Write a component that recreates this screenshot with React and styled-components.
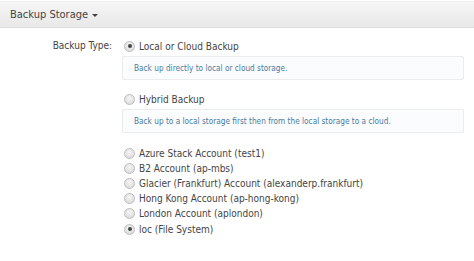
import React from "react";
import styled, { createGlobalStyle } from "styled-components";

const Global = createGlobalStyle`
  html, body { margin: 0; padding: 0; background: #fff; }
  body { font-family: "DejaVu Sans Condensed", "DejaVu Sans", Verdana, sans-serif; color: #444; }
`;

const Page = styled.div`
  width: 474px;
  height: 261px;
  overflow: hidden;
  padding-top: 1px;
  box-sizing: border-box;
`;

const Header = styled.div`
  height: 25px;
  display: flex;
  align-items: center;
  padding-left: 10px;
  background: linear-gradient(#f6f6f6, #e8e8e8);
  border-top: 1px solid #f0f0f0;
  border-bottom: 1px solid #dcdcdc;
  font-size: 11px;
  color: #444;
`;

const Caret = styled.span`
  display: inline-block;
  margin-left: 4px;
  width: 0;
  height: 0;
  border-left: 3px solid transparent;
  border-right: 3px solid transparent;
  border-top: 3px solid #444;
  transform: translateY(1px);
`;

const Body = styled.div`
  display: grid;
  grid-template-columns: 112px 1fr;
  column-gap: 10px;
  padding-top: 10px;
  padding-right: 10px;
`;

const Label = styled.div`
  text-align: right;
  font-size: 10px;
  line-height: 16px;
  color: #444;
`;

const Options = styled.div`
  display: flex;
  flex-direction: column;
`;

const Radio = styled.label`
  display: flex;
  align-items: center;
  gap: 4px;
  height: ${(p) => p.$h || 15.2}px;
  font-size: 10px;
  color: #444;
  white-space: nowrap;
  padding-left: 2px;
`;

const Dot = styled.span`
  width: 11px;
  height: 11px;
  border-radius: 50%;
  box-sizing: border-box;
  border: 1px solid #bdbdbd;
  background: radial-gradient(circle at 50% 35%, #f5f5f5, #d6d6d6);
  display: flex;
  align-items: center;
  justify-content: center;
  flex: none;
  &::after {
    content: "";
    width: 4px;
    height: 4px;
    border-radius: 50%;
    background: ${(p) => (p.$on ? "#444" : "transparent")};
  }
`;

const Desc = styled.div`
  margin-top: 2px;
  height: 24px;
  box-sizing: border-box;
  border: 1px solid #ececec;
  background: #fbfcfd;
  border-radius: 2px;
  padding-left: 11px;
  display: flex;
  align-items: center;
  font-size: 8.2px;
  color: #4a7ba0;
`;

const Gap = styled.div`
  height: ${(p) => p.$h}px;
`;

const accounts = [
  ["Azure Stack Account (test1)", false],
  ["B2 Account (ap-mbs)", false],
  ["Glacier (Frankfurt) Account (alexanderp.frankfurt)", false],
  ["Hong Kong Account (ap-hong-kong)", false],
  ["London Account (aplondon)", false],
  ["loc (File System)", true],
];

export default function App() {
  return (
    <Page>
      <Global />
      <Header>
        Backup Storage<Caret />
      </Header>
      <Body>
        <Label>Backup Type:</Label>
        <Options>
          <Radio $h={16}>
            <Dot $on />
            Local or Cloud Backup
          </Radio>
          <Desc>Back up directly to local or cloud storage.</Desc>
          <Gap $h={11} />
          <Radio $h={16}>
            <Dot />
            Hybrid Backup
          </Radio>
          <Desc>Back up to a local storage first then from the local storage to a cloud.</Desc>
          <Gap $h={12.5} />
          {accounts.map(([t, on]) => (
            <Radio key={t}>
              <Dot $on={on} />
              {t}
            </Radio>
          ))}
        </Options>
      </Body>
    </Page>
  );
}
